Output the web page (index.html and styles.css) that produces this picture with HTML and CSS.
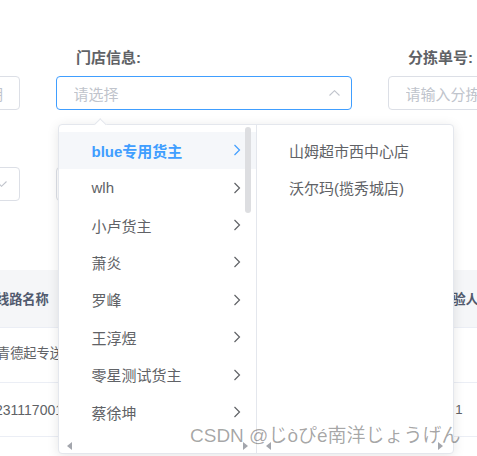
FILE: index.html
```html
<!DOCTYPE html>
<html lang="zh-CN">
<head>
<meta charset="utf-8">
<title>门店信息</title>
<link rel="stylesheet" href="styles.css">
</head>
<body>
<div class="page">
  <div class="form">
    <div class="form-row">
      <div class="item">
        <div class="label">日期:</div>
        <div class="input input-end"><span class="ph">结束日期</span></div>
      </div>
      <div class="item">
        <div class="label">门店信息:</div>
        <div class="input is-focus">
          <span class="ph">请选择</span>
          <svg class="caret" width="11" height="6" viewBox="0 0 11 6"><path d="M0.5 5.5 L5.5 0.7 L10.5 5.5" fill="none" stroke="#c0c4cc" stroke-width="1.1"/></svg>
        </div>
      </div>
      <div class="item">
        <div class="label">分拣单号:</div>
        <div class="input"><span class="ph">请输入分拣单号</span></div>
      </div>
    </div>
    <div class="form-row row2">
      <div class="item">
        <div class="label">状态:</div>
        <div class="input input-end">
          <svg class="caret" width="11" height="6" viewBox="0 0 11 6"><path d="M0.5 0.5 L5.5 5.3 L10.5 0.5" fill="none" stroke="#c0c4cc" stroke-width="1.1"/></svg>
        </div>
      </div>
      <div class="item">
        <div class="label">线路:</div>
        <div class="input"><span class="ph">请选择</span></div>
      </div>
    </div>
  </div>

  <div class="table">
    <div class="tr th"><div class="td c1">线路名称</div><div class="td cmid"></div><div class="td cr">检验人</div></div>
    <div class="tr r1"><div class="td c1 body1">青德起专送线路</div><div class="td cmid"></div><div class="td cr"></div></div>
    <div class="tr r2"><div class="td c1 num">2311170012</div><div class="td cmid"></div><div class="td cr">1</div></div>
  </div>

  <div class="popper">
    <div class="popper-arrow"></div>
    <div class="menu menu-left">
      <ul class="list">
        <li class="node active"><span>blue专用货主</span><svg class="chev" width="8" height="12" viewBox="0 0 8 12"><path d="M1.5 1 L6.5 6 L1.5 11" fill="none" stroke="currentColor" stroke-width="1.2"/></svg></li>
        <li class="node"><span>wlh</span><svg class="chev" width="8" height="12" viewBox="0 0 8 12"><path d="M1.5 1 L6.5 6 L1.5 11" fill="none" stroke="currentColor" stroke-width="1.2"/></svg></li>
        <li class="node"><span>小卢货主</span><svg class="chev" width="8" height="12" viewBox="0 0 8 12"><path d="M1.5 1 L6.5 6 L1.5 11" fill="none" stroke="currentColor" stroke-width="1.2"/></svg></li>
        <li class="node"><span>萧炎</span><svg class="chev" width="8" height="12" viewBox="0 0 8 12"><path d="M1.5 1 L6.5 6 L1.5 11" fill="none" stroke="currentColor" stroke-width="1.2"/></svg></li>
        <li class="node"><span>罗峰</span><svg class="chev" width="8" height="12" viewBox="0 0 8 12"><path d="M1.5 1 L6.5 6 L1.5 11" fill="none" stroke="currentColor" stroke-width="1.2"/></svg></li>
        <li class="node"><span>王淳煜</span><svg class="chev" width="8" height="12" viewBox="0 0 8 12"><path d="M1.5 1 L6.5 6 L1.5 11" fill="none" stroke="currentColor" stroke-width="1.2"/></svg></li>
        <li class="node"><span>零星测试货主</span><svg class="chev" width="8" height="12" viewBox="0 0 8 12"><path d="M1.5 1 L6.5 6 L1.5 11" fill="none" stroke="currentColor" stroke-width="1.2"/></svg></li>
        <li class="node"><span>蔡徐坤</span><svg class="chev" width="8" height="12" viewBox="0 0 8 12"><path d="M1.5 1 L6.5 6 L1.5 11" fill="none" stroke="currentColor" stroke-width="1.2"/></svg></li>
      </ul>
      <div class="vbar"></div>
      <div class="hbar"><i class="tri tri-l"></i><i class="tri tri-r"></i></div>
    </div>
    <div class="menu menu-right">
      <ul class="list">
        <li class="node leaf"><span>山姆超市西中心店</span></li>
        <li class="node leaf"><span>沃尔玛(揽秀城店)</span></li>
      </ul>
      <div class="hbar"><i class="tri tri-l"></i><i class="tri tri-r"></i></div>
    </div>
  </div>

  <div class="watermark">CSDN @じòぴé南洋じょうげん</div>
</div>
</body>
</html>
```

FILE: styles.css
```css
* { box-sizing: border-box; }
html, body { margin: 0; padding: 0; }
body {
  width: 477px;
  height: 456px;
  overflow: hidden;
  background: #fff;
  font-family: "Liberation Sans", "Noto Sans CJK SC", sans-serif;
  color: #606266;
}
.page {
  position: relative;
  width: 477px;
  height: 456px;
  overflow: hidden;
}

/* form */
.form { padding-top: 47px; }
.form-row {
  display: flex;
  gap: 36px;
  margin-left: -276px;
}
.row2 { margin-top: 28px; }
.item { width: 296px; flex: none; }
.label {
  height: 22px;
  line-height: 22px;
  font-size: 15px;
  font-weight: bold;
  padding-left: 20px;
  margin-bottom: 7px;
  color: #606266;
  white-space: nowrap;
}
.input {
  height: 34px;
  border: 1px solid #dcdfe6;
  border-radius: 4px;
  display: flex;
  align-items: center;
  padding: 0 11px 0 16.5px;
  font-size: 15px;
}
.input.is-focus { border-color: #409eff; }
.ph {
  color: #c0c4cc;
  flex: 1;
  white-space: nowrap;
  overflow: hidden;
}
.input-end { justify-content: flex-end; padding-right: 16px; }
.input-end .ph { flex: none; }
.row2 .input-end { padding-right: 12px; }
.caret { flex: none; display: block; }

/* table */
.table {
  margin-top: 69px;
  margin-left: -4px;
  width: 492px;
  font-size: 13.2px;
}
.tr {
  display: flex;
  align-items: center;
  border-bottom: 1px solid #ebeef5;
}
.th {
  height: 58px;
  background: #f5f6f8;
  font-weight: bold;
  color: #515a6e;
}
.r1 { height: 55px; padding-bottom: 6px; }
.r2 { height: 54px; }
.td { white-space: nowrap; overflow: hidden; }
.c1 { width: 150px; }
.body1 { padding-left: 1px; }
.num { font-size: 14px; margin-left: -1px; }
.cmid { flex: 1; }
.cr { width: 58px; text-align: center; }

/* cascader popper */
.popper {
  position: absolute;
  left: 58px;
  top: 124px;
  width: 396px;
  height: 330px;
  background: #fff;
  border: 1px solid #e4e7ed;
  border-radius: 4px;
  box-shadow: 0 2px 12px 0 rgba(0, 0, 0, 0.1);
  display: flex;
}
.popper-arrow {
  position: absolute;
  left: 37px;
  top: -5.3px;
  width: 8.5px;
  height: 8.5px;
  background: #fff;
  border-left: 1px solid #e4e7ed;
  border-top: 1px solid #e4e7ed;
  transform: rotate(45deg);
}
.menu {
  position: relative;
  width: 197px;
  height: 100%;
  display: flex;
  flex-direction: column;
}
.menu-left {
  width: 198px;
  border-right: 1px solid #e4e7ed;
}
.list {
  list-style: none;
  margin: 0;
  padding: 6.6px 0 0;
  flex: 1;
}
.node {
  height: 37.4px;
  display: flex;
  align-items: center;
  justify-content: space-between;
  padding: 0 15px 0 32.5px;
  font-size: 15px;
  color: #606266;
  white-space: nowrap;
}
.node.active {
  background: #f5f7fa;
  color: #409eff;
  font-weight: bold;
}
.chev { display: block; flex: none; }
.vbar {
  position: absolute;
  right: 4.5px;
  top: 2px;
  width: 6px;
  height: 86px;
  border-radius: 3px;
  background: #dddee1;
}
.hbar {
  height: 14px;
  display: flex;
  align-items: center;
  justify-content: space-between;
  padding: 0 8px 0 8px;
}
.tri {
  display: block;
  width: 0;
  height: 0;
  border-top: 4px solid transparent;
  border-bottom: 4px solid transparent;
}
.tri-l { border-right: 5px solid #a3a6ad; }
.tri-r { border-left: 5px solid #a3a6ad; }
.menu-right .hbar { padding: 0 10px 0 9px; }

/* watermark */
.watermark {
  position: absolute;
  left: 190px;
  top: 425px;
  font-family: "Liberation Sans", "Noto Sans CJK JP", sans-serif;
  font-size: 19px;
  line-height: 22px;
  color: rgba(0, 0, 0, 0.36);
  white-space: nowrap;
}
```
